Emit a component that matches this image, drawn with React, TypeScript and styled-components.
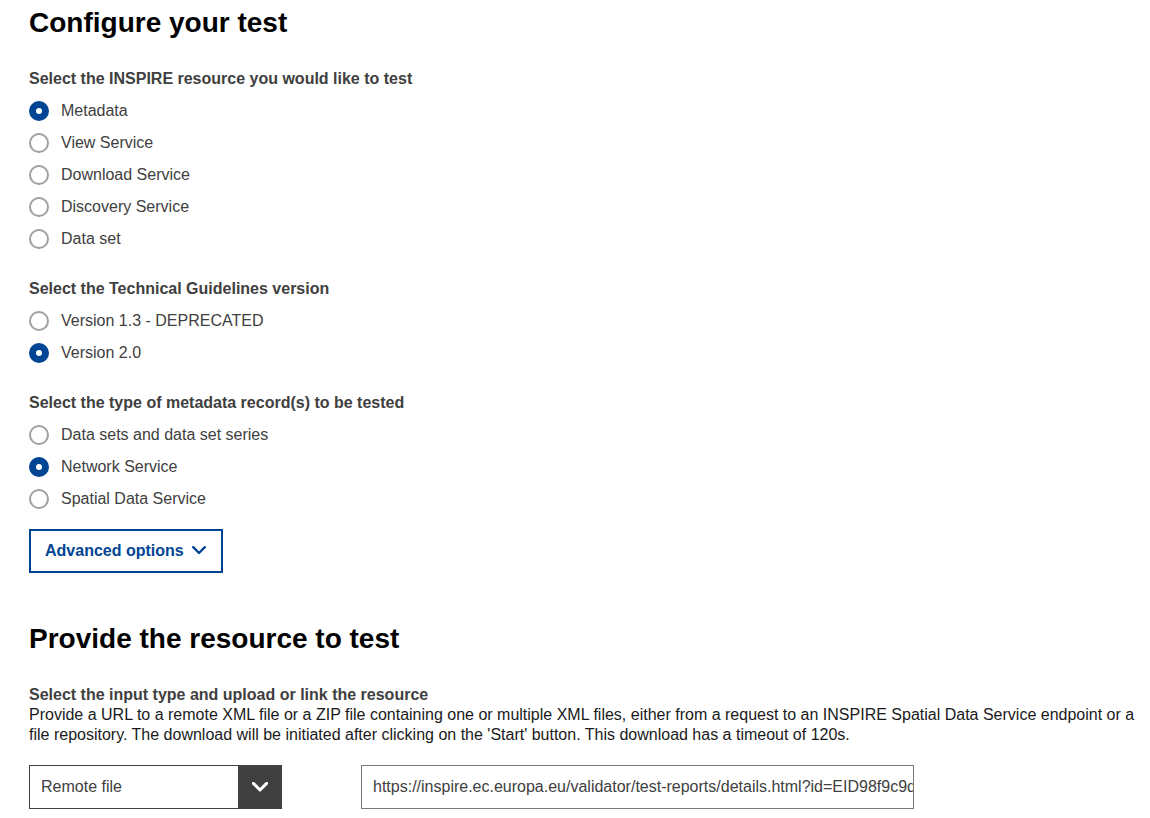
import React from "react";
import styled, { createGlobalStyle } from "styled-components";

const Global = createGlobalStyle`
  html, body { margin: 0; padding: 0; background: #fff; }
  body { font-family: "Liberation Sans", Arial, sans-serif; color: #404040; }
  * { box-sizing: border-box; }
`;

const Page = styled.main`
  padding: 6px 0 0 29px;
  width: 1150px;
`;

const Heading = styled.h2<{ $top?: number }>`
  margin: ${(p) => p.$top ?? 0}px 0 0 0;
  font-size: 28px;
  line-height: 33.6px;
  font-weight: 700;
  color: #000;
`;

const Fieldset = styled.fieldset<{ $top: number }>`
  border: 0;
  margin: ${(p) => p.$top}px 0 0 0;
  padding: 0;
  min-width: 0;
`;

const Legend = styled.legend`
  padding: 0;
  font-size: 16px;
  line-height: 32px;
  font-weight: 700;
  color: #404040;
`;

const RadioRow = styled.label`
  display: flex;
  align-items: center;
  gap: 12px;
  height: 32px;
  font-size: 16px;
  color: #404040;
  cursor: pointer;
`;

const RadioMark = styled.span<{ $checked: boolean }>`
  flex: none;
  width: 20px;
  height: 20px;
  border-radius: 50%;
  background: #fff;
  border: ${(p) => (p.$checked ? "7px solid #004494" : "2px solid #a0a0a0")};
`;

const OutlineButton = styled.button`
  margin-top: 14px;
  display: inline-flex;
  align-items: center;
  gap: 8px;
  height: 44px;
  padding: 0 15px 0 14px;
  border: 2px solid #004494;
  background: #fff;
  color: #004494;
  font-family: "Liberation Sans", Arial, sans-serif;
  font-size: 16px;
  font-weight: 700;
  white-space: nowrap;
`;

const Label = styled.div`
  margin-top: 30px;
  font-size: 16px;
  line-height: 20px;
  font-weight: 700;
  color: #404040;
`;

const Help = styled.p`
  margin: 0;
  font-size: 16px;
  line-height: 20px;
  color: #1a1a1a;
  max-width: 1114px;
`;

const InputRow = styled.div`
  margin-top: 20px;
  display: flex;
  gap: 79px;
`;

const Select = styled.div`
  display: flex;
  width: 253px;
  height: 44px;
  border: 1px solid #404040;
  background: #fff;
`;

const SelectText = styled.span`
  flex: 1;
  display: flex;
  align-items: center;
  padding-left: 11px;
  font-size: 16px;
  color: #404040;
`;

const SelectArrow = styled.span`
  width: 44px;
  margin: -1px -1px -1px 0;
  background: #404040;
  display: flex;
  align-items: center;
  justify-content: center;
`;

const UrlInput = styled.div`
  width: 553px;
  height: 44px;
  border: 1px solid #7a7a7a;
  display: flex;
  align-items: center;
  padding: 0 0 0 11px;
  font-size: 16px;
  color: #404040;
`;

const UrlText = styled.span`
  width: 540px;
  white-space: nowrap;
  overflow: hidden;
`;

const Chevron = ({ color, w = 14, sw = 2.4 }: { color: string; w?: number; sw?: number }) => (
  <svg width={w} height={w * 0.6} viewBox="0 0 14 8.4" fill="none">
    <path d="M1.2 1.2 L7 7 L12.8 1.2" stroke={color} strokeWidth={sw} strokeLinecap="round" strokeLinejoin="round" />
  </svg>
);

type Group = { legend: string; options: string[]; selected: number; top: number };

const groups: Group[] = [
  {
    legend: "Select the INSPIRE resource you would like to test",
    options: ["Metadata", "View Service", "Download Service", "Discovery Service", "Data set"],
    selected: 0,
    top: 23,
  },
  {
    legend: "Select the Technical Guidelines version",
    options: ["Version 1.3 - DEPRECATED", "Version 2.0"],
    selected: 1,
    top: 18,
  },
  {
    legend: "Select the type of metadata record(s) to be tested",
    options: ["Data sets and data set series", "Network Service", "Spatial Data Service"],
    selected: 1,
    top: 18,
  },
];

export default function App() {
  return (
    <>
      <Global />
      <Page>
        <Heading>Configure your test</Heading>
        {groups.map((g) => (
          <Fieldset key={g.legend} $top={g.top}>
            <Legend>{g.legend}</Legend>
            {g.options.map((o, i) => (
              <RadioRow key={o}>
                <RadioMark $checked={i === g.selected} />
                {o}
              </RadioRow>
            ))}
          </Fieldset>
        ))}
        <OutlineButton>
          Advanced options
          <Chevron color="#004494" />
        </OutlineButton>
        <Heading $top={49}>Provide the resource to test</Heading>
        <Label>Select the input type and upload or link the resource</Label>
        <Help>
          Provide a URL to a remote XML file or a ZIP file containing one or multiple XML files, either from a
          request to an INSPIRE Spatial Data Service endpoint or a file repository. The download will be initiated
          after clicking on the 'Start' button. This download has a timeout of 120s.
        </Help>
        <InputRow>
          <Select>
            <SelectText>Remote file</SelectText>
            <SelectArrow>
              <Chevron color="#fff" w={16} sw={2.6} />
            </SelectArrow>
          </Select>
          <UrlInput>
            <UrlText>https://inspire.ec.europa.eu/validator/test-reports/details.html?id=EID98f9c9d1</UrlText>
          </UrlInput>
        </InputRow>
      </Page>
    </>
  );
}
